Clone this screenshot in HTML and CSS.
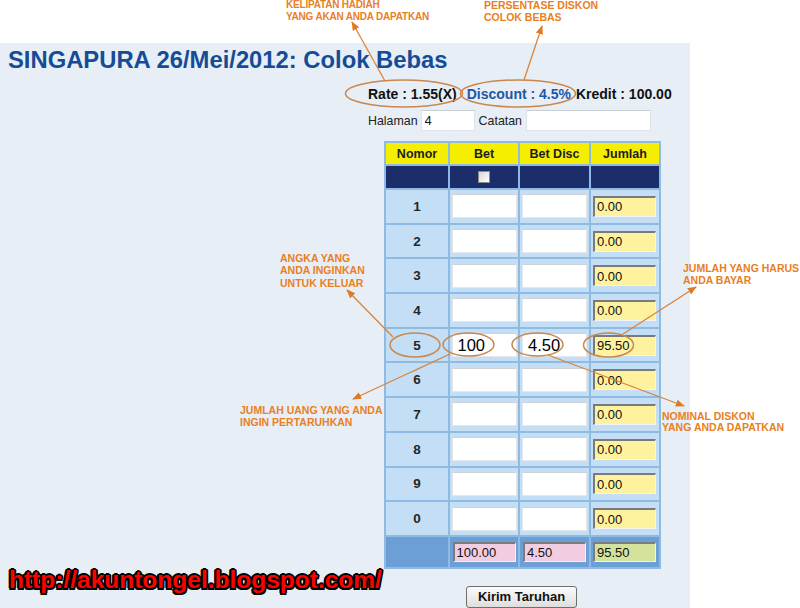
FILE: index.html
```html
<!DOCTYPE html>
<html>
<head>
<meta charset="utf-8">
<title>Colok Bebas</title>
<link rel="stylesheet" href="styles.css">
</head>
<body>
<div class="page">
  <div class="panel">
    <h1 class="title">SINGAPURA 26/Mei/2012: Colok Bebas</h1>
    <div class="content">
      <div class="info">
        <span class="rate">Rate : 1.55(X)</span>
        <span class="disc">Discount : 4.5%</span>
        <span class="kredit">Kredit : 100.00</span>
      </div>
      <div class="meta">
        <label class="lbl">Halaman</label>
        <input class="txt hal" type="text" value="4">
        <label class="lbl cat">Catatan</label>
        <input class="txt note" type="text" value="">
      </div>
      <table class="bets">
        <colgroup><col class="c1"><col class="c2"><col class="c3"><col class="c4"></colgroup>
        <thead>
          <tr class="head"><th>Nomor</th><th>Bet</th><th>Bet Disc</th><th>Jumlah</th></tr>
          <tr class="navy"><td></td><td><input class="chk" type="checkbox"></td><td></td><td></td></tr>
        </thead>
        <tbody>
          <tr class="r"><td class="num">1</td><td><input class="in" value=""></td><td><input class="in" value=""></td><td><input class="sum" value="0.00"></td></tr>
          <tr class="r"><td class="num">2</td><td><input class="in" value=""></td><td><input class="in" value=""></td><td><input class="sum" value="0.00"></td></tr>
          <tr class="r"><td class="num">3</td><td><input class="in" value=""></td><td><input class="in" value=""></td><td><input class="sum" value="0.00"></td></tr>
          <tr class="r"><td class="num">4</td><td><input class="in" value=""></td><td><input class="in" value=""></td><td><input class="sum" value="0.00"></td></tr>
          <tr class="r"><td class="num">5</td><td><input class="in big" value="100"></td><td><input class="in big" value="4.50"></td><td><input class="sum" value="95.50"></td></tr>
          <tr class="r"><td class="num">6</td><td><input class="in" value=""></td><td><input class="in" value=""></td><td><input class="sum" value="0.00"></td></tr>
          <tr class="r"><td class="num">7</td><td><input class="in" value=""></td><td><input class="in" value=""></td><td><input class="sum" value="0.00"></td></tr>
          <tr class="r"><td class="num">8</td><td><input class="in" value=""></td><td><input class="in" value=""></td><td><input class="sum" value="0.00"></td></tr>
          <tr class="r"><td class="num">9</td><td><input class="in" value=""></td><td><input class="in" value=""></td><td><input class="sum" value="0.00"></td></tr>
          <tr class="r"><td class="num">0</td><td><input class="in" value=""></td><td><input class="in" value=""></td><td><input class="sum" value="0.00"></td></tr>
        </tbody>
        <tfoot>
          <tr class="foot"><td></td><td><input class="tot pink" value="100.00"></td><td><input class="tot pink" value="4.50"></td><td><input class="tot green" value="95.50"></td></tr>
        </tfoot>
      </table>
      <div class="actions"><button class="submit" type="button">Kirim Taruhan</button></div>
    </div>
  </div>

  <svg class="marks" width="800" height="608" viewBox="0 0 800 608" xmlns="http://www.w3.org/2000/svg">
    <defs>
      <marker id="ah" viewBox="0 0 10 10" refX="9" refY="5" markerWidth="7" markerHeight="7" orient="auto-start-reverse">
        <path d="M0 1 L10 5 L0 9 Z" fill="#e07a22"/>
      </marker>
    </defs>
    <g fill="none" stroke="#c9874d" stroke-width="1.5">
      <ellipse cx="404" cy="93.5" rx="58.5" ry="13.5"/>
      <ellipse cx="518" cy="93.5" rx="57.5" ry="13.5"/>
      <ellipse cx="415" cy="345" rx="25" ry="12"/>
      <ellipse cx="468.5" cy="344.5" rx="25.5" ry="11.5"/>
      <ellipse cx="537.5" cy="344.5" rx="25.5" ry="11.5"/>
      <ellipse cx="608.5" cy="345" rx="25" ry="12"/>
    </g>
    <g stroke="#d9843a" stroke-width="1.3" fill="none">
      <line x1="385" y1="81" x2="352" y2="22" marker-end="url(#ah)"/>
      <line x1="524" y1="80" x2="542" y2="26" marker-end="url(#ah)"/>
      <line x1="393" y1="337" x2="347" y2="290" marker-end="url(#ah)"/>
      <line x1="450" y1="354" x2="353" y2="399" marker-end="url(#ah)"/>
      <line x1="548" y1="355" x2="684" y2="406" marker-end="url(#ah)"/>
      <line x1="623" y1="334" x2="696" y2="287" marker-end="url(#ah)"/>
    </g>
  </svg>

  <div class="note-lbl n-kel">KELIPATAN HADIAH<br>YANG AKAN ANDA DAPATKAN</div>
  <div class="note-lbl n-per">PERSENTASE DISKON<br>COLOK BEBAS</div>
  <div class="note-lbl n-ang">ANGKA YANG<br>ANDA INGINKAN<br>UNTUK KELUAR</div>
  <div class="note-lbl n-uang">JUMLAH UANG YANG ANDA<br>INGIN PERTARUHKAN</div>
  <div class="note-lbl n-bayar">JUMLAH YANG HARUS<br>ANDA BAYAR</div>
  <div class="note-lbl n-nom">NOMINAL DISKON<br>YANG ANDA DAPATKAN</div>

  <div class="url">http://akuntongel.blogspot.com/</div>
</div>
</body>
</html>
```

FILE: styles.css
```css
* { box-sizing: border-box; }
html, body {
  margin: 0;
  padding: 0;
  background: #ffffff;
}
body {
  font-family: "Liberation Sans", Arial, sans-serif;
  color: #111;
}
.page {
  position: relative;
  width: 800px;
  height: 608px;
  overflow: hidden;
}
.panel {
  margin-top: 43px;
  width: 690px;
  height: 565px;
  background: #e8eef5;
  padding-top: 3px;
}
.title {
  margin: 0;
  padding-left: 8px;
  font-size: 23.8px;
  line-height: 28px;
  font-weight: bold;
  color: #154c97;
}
.content {
  margin-left: 352px;
  width: 338px;
}
.info {
  display: flex;
  align-items: baseline;
  margin-top: 11px;
  padding-left: 16px;
  font-size: 14px;
  line-height: 18px;
  font-weight: bold;
  white-space: nowrap;
}
.rate { color: #111; margin-right: 10px; }
.disc { color: #1c58a8; margin-right: 5px; }
.kredit { color: #111; }
.meta {
  display: flex;
  align-items: center;
  margin-top: 7px;
  padding-left: 16px;
  height: 21px;
  font-size: 12.4px;
}
.lbl { color: #222; }
.cat { margin-left: 4px; }
.txt {
  height: 21px;
  margin: 0 0 0 3px;
  border: 1px solid #dfe3e8;
  border-top-color: #c9ced4;
  background: #fff;
  font-family: "Liberation Sans", Arial, sans-serif;
  font-size: 13px;
  padding: 0 3px;
  color: #111;
}
.hal { width: 54px; }
.note { width: 125px; margin-left: 4px; }
.bets {
  margin-top: 10px;
  margin-left: 32px;
  width: 275px;
  table-layout: fixed;
  border-collapse: collapse;
  border: 2px solid #93bde4;
}
.c1 { width: 64px; }
.c2 { width: 70px; }
.c3 { width: 71px; }
.c4 { width: 70px; }
.bets th, .bets td {
  border: 2px solid #8fbae2;
  padding: 0;
  text-align: center;
  vertical-align: middle;
}
.head { height: 23px; }
.head th {
  background: #f6ee00;
  font-size: 12.5px;
  font-weight: bold;
  color: #1d1d1d;
}
.navy { height: 24px; }
.navy td { background: #1b2d6b; }
.chk {
  appearance: none;
  -webkit-appearance: none;
  display: block;
  width: 12px;
  height: 12px;
  margin: 0 auto;
  border: 1px solid #8a8a8a;
  background: linear-gradient(135deg, #d6d6d6, #ffffff);
}
.r { height: 34.7px; }
.r td { background: #c4def5; }
.num {
  font-size: 13.5px;
  font-weight: bold;
  color: #262626;
}
.in, .sum, .tot {
  display: block;
  font-family: "Liberation Sans", Arial, sans-serif;
  color: #111;
  padding: 0 2px;
  outline: none;
}
.in {
  width: 65px;
  height: 24px;
  margin: 0 auto;
  background: #ffffff;
  border: 1px solid #e4e8ec;
  border-top-color: #cdd2d8;
  font-size: 13px;
}
.big {
  font-size: 16.5px;
  padding-left: 5px;
  color: #000;
}
.sum {
  width: 63px;
  height: 21px;
  margin: 0 0 0 2px;
  background: #fff29e;
  border: 1px solid #f4f4f4;
  border-top: 2px solid #7a7a7a;
  border-left: 2px solid #7a7a7a;
  font-size: 13px;
}
.foot { height: 32px; }
.foot td { background: #6c9fd5; }
.tot {
  width: 63px;
  height: 20px;
  margin: 0 auto;
  border: 1px solid #f2f2f2;
  border-top: 2px solid #7d7d7d;
  border-left: 2px solid #7d7d7d;
  font-size: 13px;
}
.pink { background: #f2cde2; }
.green { background: #d3e39b; margin-left: 2px; }
.actions {
  margin-top: 17px;
  padding-left: 114px;
}
.submit {
  width: 111px;
  height: 22px;
  padding: 0;
  border: 1px solid #6f6f6f;
  border-radius: 3px;
  background: linear-gradient(#fbfbfb, #dedede);
  font-family: "Liberation Sans", Arial, sans-serif;
  font-size: 13px;
  font-weight: bold;
  color: #111;
}
.marks {
  position: absolute;
  left: 0;
  top: 0;
  pointer-events: none;
}
.note-lbl {
  position: absolute;
  font-family: "Liberation Sans", Arial, sans-serif;
  font-weight: bold;
  font-size: 10.5px;
  line-height: 12px;
  color: #e8801f;
  white-space: nowrap;
}
.n-kel { left: 286px; top: -1px; font-size: 10px; letter-spacing: -0.2px; }
.n-per { left: 484px; top: 0px; line-height: 11.5px; }
.n-ang { left: 280px; top: 251.5px; line-height: 12.5px; }
.n-uang { left: 240px; top: 404px; }
.n-bayar { left: 683px; top: 261.5px; line-height: 12.5px; }
.n-nom { left: 662px; top: 410.5px; line-height: 11.5px; }
.url {
  position: absolute;
  left: 9px;
  top: 565px;
  font-family: "Liberation Sans", Arial, sans-serif;
  font-weight: bold;
  font-size: 24.5px;
  line-height: 29px;
  color: #ff0000;
  letter-spacing: 0;
  text-shadow:
    -2px 0 0 #000, 2px 0 0 #000, 0 -2px 0 #000, 0 2px 0 #000,
    -1.5px -1.5px 0 #000, 1.5px -1.5px 0 #000, -1.5px 1.5px 0 #000, 1.5px 1.5px 0 #000;
}
```
